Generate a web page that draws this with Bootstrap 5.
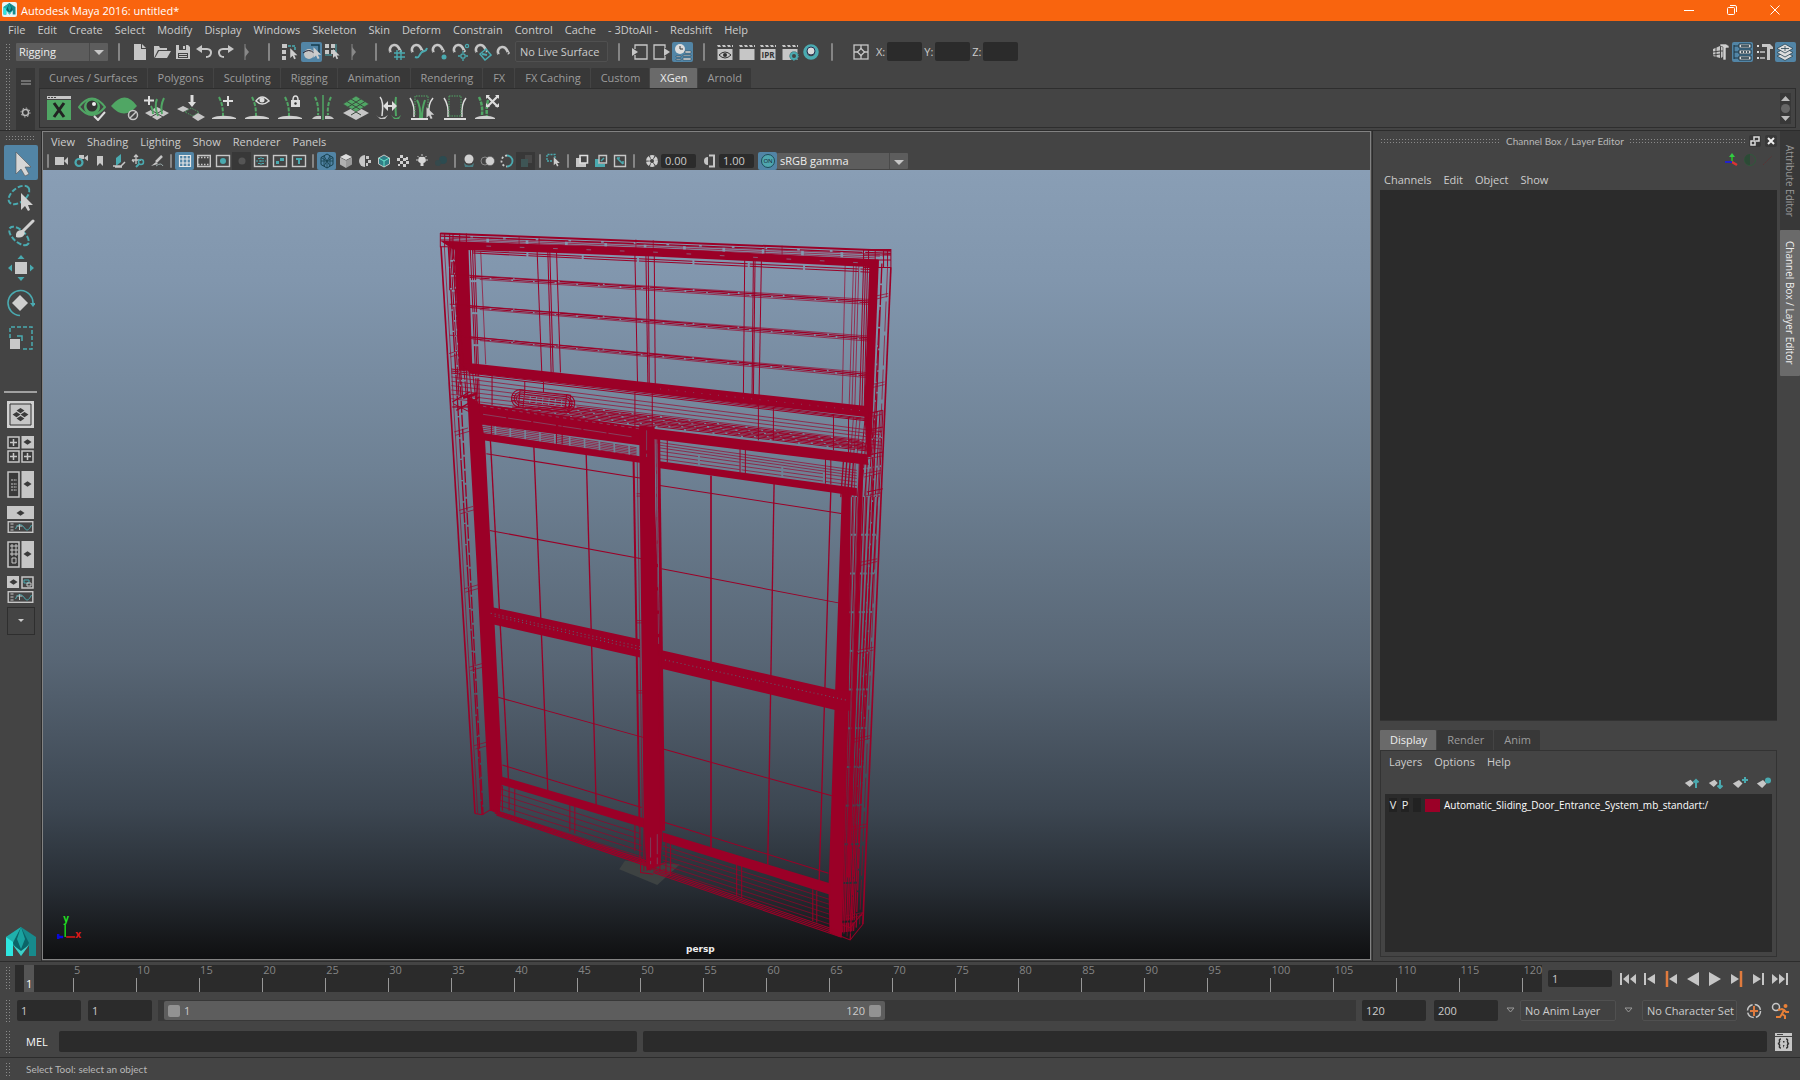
<!DOCTYPE html>
<html lang="en">
<head>
<meta charset="utf-8">
<meta name="viewport" content="width=device-width, initial-scale=1">
<title>Autodesk Maya 2016: untitled*</title>
<link rel="stylesheet" href="https://cdn.jsdelivr.net/npm/bootstrap@5.3.0/dist/css/bootstrap.min.css">
<style>
:root{--g:#c6c6c6;--t:#4aaab0;--gr:#50a664;--bg:#444;--dk:#2b2b2b;--on:#5285a6}
body{font:11px/16px "Open Sans","Noto Sans",sans-serif;background:var(--bg);color:#ccc;height:100vh;overflow:hidden}
button,input,select{font:inherit;color:inherit;border:0;background:none;padding:0;border-radius:0}
a{color:inherit;text-decoration:none}
svg{display:block;flex:none}
svg:not([fill]){fill:none}
.titlebar{height:21px;background:#f9640e;color:#fff;font-size:11px;padding-left:2px}
.wbtn{width:43px;height:19px}
.menurow{height:18px;gap:12px;padding-left:8px}
.statusrow{height:25px}
.grip{width:7px;flex:none;margin-left:5px;align-self:stretch;background:radial-gradient(circle,#8a8a8a 0 .7px,transparent .8px) 0 0/3px 3px}
.griph{height:6px;background:radial-gradient(circle,#8a8a8a 0 .7px,transparent .8px) 0 0/3px 3px}
.cell{flex:1 1 0;min-width:0;height:20px;display:flex;align-items:center;justify-content:center}
.cell.on,.vcell.on{background:var(--on);border-radius:2px}
.sepbar::before{content:"";width:2px;height:18px;background:#858585;border-radius:1px}
.picker{position:relative;background:#5d5d5d;border-radius:1px}
.picker select{appearance:none;width:100%;height:100%;padding-left:3px;color:#eee}
.picker::after{content:"";position:absolute;right:4px;top:7px;border:5px solid transparent;border-top-color:#c6c6c6;border-bottom:0;pointer-events:none}
.picker::before{content:"";position:absolute;right:18px;top:0;bottom:0;width:1px;background:#4a4a4a}
.field{background:var(--dk);border-radius:2px;color:#ccc}
.axis{margin:0 2px}
.boxed{border:1px solid #505050;border-radius:2px;height:21px;padding-left:4px;text-align:left;background:#414141}
.shelf{height:62px}
.shelfside{width:19px;background:#373737}
.tabbtn{height:20px;background:#383838;color:#9c9c9c;padding:0 9px 0 10px;margin-right:1px;border-radius:1px 1px 0 0}
.tabbtn.on{background:#6a6a6a;color:#eee}
.shelfbox{border:1px solid #2e2e2e;height:40px}
.seam{border-top:1px solid #2c2c2c}
.toolbox{width:42px;border-right:1px solid #2c2c2c}
.toolbtn{width:34px;height:35px;display:flex;align-items:center;justify-content:center}
.toolbtn.on{background:var(--on);border-radius:2px}
.toolrule{height:2px;background:#a0a0a0;margin:36px 0 8px}
.viewpanel{border:1px solid #828282;margin:0 1px 1px 0}
.vcell{width:19px;height:18px;display:flex;align-items:center;justify-content:center;flex:none}
.vsep{width:9px;height:18px;display:flex;justify-content:center;align-items:center;flex:none}
.vsep::before{content:"";width:2px;height:14px;background:#858585;border-radius:1px}
.off{opacity:.35}
.scene{flex:1 1 0;min-height:0;width:100%;background:linear-gradient(#899eb5,#8196ad 14%,#6e8194 38%,#586675 62%,#3c4651 81%,#272d34 91%,#17191c 97%,#0f1011)}
.sidepanel{width:408px;border-left:1px solid #2c2c2c;padding-left:7px;padding-right:3px}
.vtab{writing-mode:vertical-rl;width:20px;background:#383838;color:#999;text-align:center;font-size:10px}
.vtab.on{background:#6a6a6a;color:#eee;border-radius:1px}
.smallbtn{width:12px;height:12px;background:#383838;border-radius:2px}
.dark{background:var(--dk)}
.framebox{border:1px solid #333}
.split{height:1px;background:#333;margin-bottom:9px}
.timeline{height:27px;background:var(--dk);color:#848484}
.tick{position:relative;height:27px;padding-left:1px;line-height:10px;min-width:0;white-space:nowrap}
.tick::after{content:"";position:absolute;left:0;bottom:0;width:1px;height:14px;background:#989898}
.nowmark{position:absolute;left:9px;top:0;width:10px;height:27px;background:#555;color:#fff;padding:11px 0 0 2px;line-height:16px}
.w64{width:64px}
.h21{height:21px}
.pb{width:21px;height:20px;flex:1 1 0;display:flex;justify-content:center;align-items:center}
.rangebar{background:#5d5d5d;height:19px;border-radius:2px;padding:0 4px}
.knob{width:12px;height:12px;background:#929292;border-radius:2px}
.tight{font-family:Lato,"Open Sans",sans-serif;font-size:10px;color:#b8b8b8}
.hint{height:23px}
.layerbit{width:8px;height:14px;background:#222;color:#eee;text-align:center;line-height:14px}
.layername{font-size:10px;color:#fff}
</style>
<script src="https://cdn.jsdelivr.net/npm/bootstrap@5.3.0/dist/js/bootstrap.bundle.min.js"></script>
</head>
<body class="d-flex flex-column">
<svg width="0" height="0" class="position-absolute" aria-hidden="true">
<defs>
<symbol id="arrow" viewBox="0 0 20 20"><path d="M5 1v15l3.6-3.3L11 18l2.6-1.2-2.4-5H16z" fill="#cdcdcd"/></symbol>
<symbol id="mag" viewBox="0 0 18 18"><path d="M2.5 9.500C1 6 2.500 2.500 6 2c2-.2 3.500.8 4.500 2.500L13 9" stroke="#c6c6c6" stroke-width="2.600"/><path d="M1.500 9l3 2.500M12 7l-2 3.500" stroke="#444" stroke-width="1"/></symbol>
<symbol id="clap" viewBox="0 0 18 18"><path d="M1 2h3l1 2H2zM6 2h3l1 2H7zM11 2h3l1 2h-3zM16 2h1v2h-1z" fill="#c6c6c6"/><rect x="1.500" y="6" width="15" height="11" fill="#c6c6c6"/></symbol>
<symbol id="blade" viewBox="0 0 26 26"><path d="M8 2c3 6 4 11 4 19" stroke="#50a664" stroke-width="2" stroke-dasharray="4 1.500"/><path d="M1 24v-1c5-3 18-3 24 0v1z" fill="#d0d0d0"/></symbol>
<symbol id="frame" viewBox="0 0 16 16"><rect x="1.500" y="2.500" width="13" height="11" stroke="#c6c6c6" stroke-width="1.400"/></symbol>
<symbol id="dia" viewBox="0 0 10 8"><path d="M5 1l4.500 3L5 7 .5 4z" fill="#3a3a3a"/></symbol>
<symbol id="curve" viewBox="0 0 26 12"><rect x=".7" y=".7" width="24.600" height="10.600" stroke="#c6c6c6" stroke-width="1.400"/><path d="M3 3h3M3 6h3M3 9h3M9 5h6M12 3v6" stroke="#c6c6c6"/><path d="M8 8c3-7 7-4 9-1s4 3 7-3" stroke="#4aaab0"/></symbol>
<symbol id="logo" viewBox="0 0 30 30"><path d="M0 10L15 0l15 10v19h-7V18l-8 11-8-11v11H0z" fill="#178a8c"/><path d="M0 10l7 3v16H0z" fill="#2ee6e0"/><path d="M15 0l-8 16 8 13 8-13z" fill="#0b6468"/><path d="M15 0l-4 12 4 10 4-10z" fill="#1aa3a1"/><path d="M7 18l8 6 8-6-8 11z" fill="#3fd0c8"/><path d="M0 10L15 0 7 15z" fill="#20b0ac"/></symbol>
<symbol id="layer" viewBox="0 0 16 12"><path d="M1 6l7-4 4 4-5 5z" fill="#c6c6c6"/></symbol>
</defs></svg>

<header class="titlebar d-flex align-items-start">
<svg width="15" height="17"><rect y="2" width="15" height="15" rx="2" fill="#e8f4f4"/><use href="#logo" x="1" y="3" width="13" height="12"/></svg>
<span class="ms-1 me-auto mt-0 pt-0 align-self-center">Autodesk Maya 2016: untitled*</span>
<button class="wbtn" aria-label="Minimize"><svg class="mx-auto" width="12" height="12"><path d="M1 6.500h10" stroke="#fff"/></svg></button>
<button class="wbtn" aria-label="Restore"><svg class="mx-auto" width="12" height="12" stroke="#fff"><rect x="1.500" y="3.500" width="7" height="7" rx="1"/><path d="M4 1.500h5q1.500 0 1.500 1.500v5"/></svg></button>
<button class="wbtn me-1" aria-label="Close"><svg class="mx-auto" width="12" height="12" stroke="#fff"><path d="M1.500 1.500l9 9m0-9l-9 9"/></svg></button>
</header>

<nav class="menurow d-flex align-items-center">
<a href="#">File</a><a href="#">Edit</a><a href="#">Create</a><a href="#">Select</a><a href="#">Modify</a><a href="#">Display</a><a href="#">Windows</a><a href="#">Skeleton</a><a href="#">Skin</a><a href="#">Deform</a><a href="#">Constrain</a><a href="#">Control</a><a href="#">Cache</a><a href="#">- 3DtoAll -</a><a href="#">Redshift</a><a href="#">Help</a>
</nav>

<div class="statusrow d-flex align-items-center">
<div class="grip my-1"></div>
<div class="picker ms-1" style="width:92px;height:18px"><select aria-label="Menu set"><option>Rigging</option></select></div>
<div class="d-flex align-items-center" style="width:407px" role="toolbar">
<span class="cell sepbar"></span>
<button class="cell" aria-label="New"><svg width="16" height="18"><path d="M2 1h7v5h5v11H2zM10 1l4 4h-4z" fill="#c6c6c6"/></svg></button>
<button class="cell" aria-label="Open"><svg width="18" height="16"><path d="M1 14V2h5l1 2h7v2H5zM6 7h12l-4 7H2z" fill="#c6c6c6"/></svg></button>
<button class="cell" aria-label="Save"><svg width="16" height="16"><path d="M1 1h12l2 2v12H1z" fill="#c6c6c6"/><path d="M4 1h7v5H4zM3 9h10v5H3z" fill="#444"/><path d="M8 2h2v3H8zM4 10h8v1H4zm0 2h8v1H4z" fill="#c6c6c6"/></svg></button>
<button class="cell" aria-label="Undo"><svg width="17" height="16"><path d="M5 5h6c6 0 5 8-1 8" stroke="#c6c6c6" stroke-width="2"/><path d="M0 5l6-4v8z" fill="#c6c6c6"/></svg></button>
<button class="cell" aria-label="Redo"><svg width="17" height="16"><path d="M12 5H6c-6 0-5 8 1 8" stroke="#c6c6c6" stroke-width="2"/><path d="M17 5l-6-4v8z" fill="#c6c6c6"/></svg></button>
<span class="cell"><svg width="6" height="18"><path d="M1 1v16" stroke="#888"/><path d="M1 4l4 5-4 5z" fill="#888"/></svg></span>
<span class="cell sepbar"></span>
<button class="cell" aria-label="Select by hierarchy"><svg width="18" height="18"><path d="M1 1h5v4H1zM1 7h4v4H1zM1 13h4v4H1z" fill="#c6c6c6"/><path d="M7 3h7v4" stroke="#4aaab0" stroke-width="1.500" stroke-dasharray="3 1"/><use href="#arrow" x="6" y="4" width="13" height="14"/></svg></button>
<button class="cell on" aria-label="Select by object"><svg width="20" height="18"><path d="M9 2h8v8" stroke="#163c4e" stroke-width="1.500"/><circle cx="7" cy="11" r="5" fill="#c6c6c6"/><path d="M1 10q6-5 11 0" stroke="#223" /><use href="#arrow" x="8" y="3" width="14" height="15"/></svg></button>
<button class="cell" aria-label="Select by component"><svg width="18" height="18"><path d="M1 1h4v4H1zM7 1h4v4H7zM1 7h4v4H1zM7 7h4v4H7z" fill="#c6c6c6"/><path d="M12 1v9M1 12h7" stroke="#4aaab0"/><use href="#arrow" x="6" y="5" width="12" height="13"/></svg></button>
<span class="cell"><svg width="6" height="18"><path d="M1 1v16" stroke="#888"/><path d="M1 4l4 5-4 5z" fill="#888"/></svg></span>
<span class="cell sepbar"></span>
<button class="cell" aria-label="Snap to grid"><svg width="18" height="18"><use href="#mag" width="18" height="18"/><path d="M6 10h11M6 14h11M9 7v10M13 7v10" stroke="#4aaab0" stroke-width="1.400"/></svg></button>
<button class="cell" aria-label="Snap to curve"><svg width="18" height="18"><use href="#mag" width="18" height="18"/><path d="M5 14c5 2 4-3 7-5s4 0 5-4" stroke="#4aaab0" stroke-width="2"/></svg></button>
<button class="cell" aria-label="Snap to point"><svg width="18" height="18"><use href="#mag" width="18" height="18"/><circle cx="13" cy="14" r="2.500" fill="#4aaab0"/></svg></button>
<button class="cell" aria-label="Snap to projected center"><svg width="18" height="18"><use href="#mag" width="18" height="18"/><g stroke="#4aaab0" stroke-width="1.300"><circle cx="11" cy="13" r="2.200"/><circle cx="15" cy="3" r="1.600"/><path d="M11 8v2m0 6v2m-5-5h2m6 0h2"/></g></svg></button>
<button class="cell" aria-label="Snap to view plane"><svg width="18" height="18"><use href="#mag" width="18" height="18"/><path d="M6 11l6-5 5 6-6 5z" stroke="#4aaab0" stroke-width="1.500"/><path d="M8 11l5 1" stroke="#4aaab0" stroke-width="2"/></svg></button>
<button class="cell" aria-label="Make live"><svg width="18" height="18"><use href="#mag" x="1" y="2" width="18" height="18"/></svg></button>
</div>
<button class="boxed" style="width:93px">No Live Surface</button>
<div class="d-flex align-items-center" style="width:235px" role="toolbar">
<span class="cell sepbar"></span>
<button class="cell" aria-label="Input connections"><svg width="18" height="18"><path d="M4 6V2h12v14H4v-4" stroke="#c6c6c6" stroke-width="1.300"/><path d="M1 5l6 4-6 4z" fill="#c6c6c6"/></svg></button>
<button class="cell" aria-label="Output connections"><svg width="18" height="18"><path d="M13 5V2H2v14h11v-3" stroke="#c6c6c6" stroke-width="1.300"/><path d="M12 5l6 4-6 4z" fill="#c6c6c6"/></svg></button>
<button class="cell on" aria-label="Construction history"><svg width="18" height="18"><circle cx="6" cy="6" r="5" fill="#ddd"/><path d="M6 3v3h3" stroke="#333"/><path d="M11 8h6v2h-6zM9 12h8v1H9zM9 15h8v2H9zM2 13h5v1H2zM2 16h5v1H2z" fill="#e0e0e0" stroke="#203948" stroke-width=".5"/></svg></button>
<span class="cell sepbar"></span>
<button class="cell" aria-label="Render view"><svg width="18" height="18"><use href="#clap" width="18" height="18"/><path d="M3 12q6-6 12 0q-6 6-12 0z" stroke="#333"/><circle cx="9" cy="12" r="2" fill="#333"/></svg></button>
<button class="cell" aria-label="Render frame"><svg width="18" height="18"><use href="#clap" width="18" height="18"/></svg></button>
<button class="cell" aria-label="IPR render"><svg width="18" height="18"><use href="#clap" width="18" height="18"/><text x="9" y="15" font-size="8" font-weight="700" fill="#333" text-anchor="middle">IPR</text></svg></button>
<button class="cell" aria-label="Render settings"><svg width="18" height="18"><use href="#clap" width="18" height="18"/><circle cx="13" cy="13" r="4.500" fill="#444"/><circle cx="13" cy="13" r="3" stroke="#4aaab0" stroke-width="2"/><circle cx="13" cy="13" r="4.300" stroke="#4aaab0" stroke-dasharray="1.500 1.500"/></svg></button>
<button class="cell" aria-label="Hypershade"><svg width="18" height="18"><circle cx="9" cy="9" r="6" stroke="#4aaab0" stroke-width="3.500"/><circle cx="9" cy="8" r="4" fill="#d8d8d8" stroke="#235" /></svg></button>
<span class="cell sepbar"></span>
</div>
<button class="vcell ms-2" aria-label="Input operations"><svg width="16" height="16" stroke="#c6c6c6" stroke-width="1.300"><rect x="1" y="1" width="14" height="14"/><path d="M8 1v4m0 6v4M1 8h4m6 0h4"/><rect x="5.500" y="5.500" width="5" height="5" transform="rotate(45 8 8)"/></svg></button>
<label class="axis ps-1" for="cx">X:</label><input id="cx" class="field" style="width:35px;height:19px">
<label class="axis" for="cy">Y:</label><input id="cy" class="field" style="width:35px;height:19px">
<label class="axis" for="cz">Z:</label><input id="cz" class="field" style="width:35px;height:19px">
<div class="d-flex ms-auto me-1" style="width:86px">
<button class="cell" aria-label="Modeling toolkit"><svg width="18" height="18"><path d="M1 6l7-3v12l-7-2zM9 3l3 1v9l-3 2z" fill="#c6c6c6"/><path d="M1 9l7-1m-7 4l7-1M4 4v10m5-6h3" stroke="#444"/><path d="M8 1h6l3 2v2h-3v12h-3V4L8 3z" fill="#d0d0d0" stroke="#444" stroke-width=".6"/></svg></button>
<button class="cell on" aria-label="Channel box"><svg width="20" height="18"><path d="M2 2v14M2 3h5M2 9h5M2 15h5" stroke="#1c3442"/><path d="M7 1h12v4H7zM7 7h12v4H7zM7 13h12v4H7z" fill="#ddd" stroke="#1c3442"/><path d="M9 3h8M9 15h8M9 9h2m1 0h2m1 0h2" stroke="#1c3442" stroke-width="1.500"/></svg></button>
<button class="cell" aria-label="Tool settings"><svg width="18" height="18"><path d="M2 2h2v2H2zM2 8h2v2H2zM2 14h2v2H2z" fill="#ddd"/><path d="M5 9h5M5 15h5" stroke="#c6c6c6" stroke-width="1.500"/><path d="M7 1h8l3 3v2h-3v11h-3V4H7z" fill="#c6c6c6"/></svg></button>
<button class="cell on" aria-label="Layers"><svg width="18" height="18" fill="#ddd" stroke="#2b4452" stroke-width=".8"><path d="M9 9l8 4-8 4.500L1 13z"/><path d="M9 5l8 4.500L9 14 1 9.500z"/><path d="M9 1l8 4.500L9 10 1 5.500z"/><path d="M5 5.500h8M9 3v5"/></svg></button>
</div>
</div>

<section class="shelf d-flex mt-1">
<div class="grip"></div>
<div class="shelfside ms-1 d-flex flex-column align-items-center justify-content-between">
<button aria-label="Shelf menu" class="mt-2 pt-1"><svg width="10" height="5"><path d="M0 1h10M0 4h10" stroke="#aaa"/></svg></button>
<button aria-label="Shelf options" class="mb-2 pb-1"><svg width="11" height="11"><circle cx="5.500" cy="5.500" r="3" stroke="#bbb" stroke-width="1.500"/><circle cx="5.500" cy="5.500" r="4.500" stroke="#bbb" stroke-dasharray="1.500 2"/></svg></button>
</div>
<div class="flex-fill d-flex flex-column ms-1 me-1">
<div class="d-flex"><button class="tabbtn">Curves / Surfaces</button><button class="tabbtn">Polygons</button><button class="tabbtn">Sculpting</button><button class="tabbtn">Rigging</button><button class="tabbtn">Animation</button><button class="tabbtn">Rendering</button><button class="tabbtn">FX</button><button class="tabbtn">FX Caching</button><button class="tabbtn">Custom</button><button class="tabbtn on">XGen</button><button class="tabbtn">Arnold</button></div>
<div class="shelfbox d-flex align-items-center">
<div class="d-flex align-items-center" style="width:461px;margin-left:3px" role="toolbar">
<button class="cell" aria-label="XGen window"><svg width="26" height="26"><path d="M1 1h24v3H1z" fill="#c6c6c6"/><path d="M2 2.500h9" stroke="#444" stroke-dasharray="2 1"/><path d="M1 5h24v20H1z" fill="#50a664"/><path d="M8 8l10 14M18 8L8 22" stroke="#222" stroke-width="3"/></svg></button>
<button class="cell" aria-label="Preview"><svg width="28" height="26"><path d="M1 12Q14-5 27 12Q14 28 1 12z" stroke="#50a664" stroke-width="2"/><circle cx="14" cy="12" r="8" fill="#50a664"/><circle cx="14" cy="11" r="5.500" fill="#333"/><circle cx="16" cy="9" r="2" fill="#eee"/><path d="M16 21l4 4 7-8" stroke="#ddd" stroke-width="2"/></svg></button>
<button class="cell" aria-label="Clear preview"><svg width="28" height="26"><path d="M0 11Q14-6 26 11Q13 26 0 11z" fill="#50a664"/><circle cx="22" cy="20" r="4.500" fill="#444" stroke="#c6c6c6" stroke-width="1.500"/><path d="M19 23l6-6" stroke="#c6c6c6" stroke-width="1.500"/></svg></button>
<button class="cell" aria-label="Add guides"><svg width="28" height="26"><path d="M13 12l12 6-12 7-12-7z" fill="#c6c6c6"/><path d="M7 15l12 7M19 15L7 22" stroke="#444"/><path d="M5 1v9M0 5.500h10" stroke="#ddd" stroke-width="2"/><path d="M13 4q-3 7 1 17M20 3q-4 8-2 16M7 11q2 3 2 8" stroke="#50a664" stroke-width="2"/></svg></button>
<button class="cell" aria-label="Place guides"><svg width="28" height="26"><path d="M0 14l6-3 6 3-6 3zM15 22l6-4 7 4-7 4z" fill="#c6c6c6"/><path d="M8 17l6-4 8 4-6 4z" stroke="#50a664" stroke-dasharray="1 1"/><path d="M15 0v8" stroke="#ddd" stroke-width="3"/><path d="M11 7h8l-4 5z" fill="#ddd"/></svg></button>
<button class="cell" aria-label="Add guide"><svg width="26" height="26"><use href="#blade" width="26" height="26"/><path d="M17 1v10M12 6h10" stroke="#ddd" stroke-width="2"/></svg></button>
<button class="cell" aria-label="Show guide"><svg width="26" height="26"><use href="#blade" width="26" height="26"/><path d="M12 6Q18-2 25 6Q18 12 12 6z" stroke="#ddd" stroke-width="1.500"/><circle cx="18" cy="5" r="2.500" fill="#ddd"/></svg></button>
<button class="cell" aria-label="Lock guide"><svg width="26" height="26"><use href="#blade" width="26" height="26"/><path d="M14 5h9v7h-9z" fill="#ddd"/><path d="M16 5q0-4 2.500-4T21 5" stroke="#ddd" stroke-width="1.500"/><circle cx="18.500" cy="8.500" r="1.200" fill="#333"/></svg></button>
<button class="cell" aria-label="Mirror guides"><svg width="26" height="26"><path d="M5 2q4 8 3 18M21 2q-4 8-3 18" stroke="#50a664" stroke-width="2" stroke-dasharray="4 1.500"/><path d="M13 0v25" stroke="#50a664" stroke-width="1.500"/><path d="M2 24q3-4 9-3v3zM24 24q-3-4-9-3v3z" fill="#c6c6c6"/></svg></button>
<button class="cell" aria-label="Bake"><svg width="28" height="26"><path d="M14 11l13 7-13 7-13-7z" fill="#c6c6c6"/><path d="M14 1l13 8-13 8L1 9z" fill="#50a664" stroke="#444" stroke-width=".6"/><path d="M9 4l13 8M5 6.500l13 8M19 4L6 12M23 6.500l-13 8M9 20l5-3 5 3" stroke="#3b4a3e"/></svg></button>
<button class="cell" aria-label="Transfer"><svg width="26" height="26"><path d="M4 2q4 4 2 19" stroke="#ddd" stroke-width="1.500"/><path d="M20 2q-1 6 0 19" stroke="#50a664" stroke-width="2"/><path d="M9 11h9" stroke="#ddd" stroke-width="2"/><path d="M12 6v10l-5-5zM16 6v10l5-5z" fill="#ddd"/><path d="M0 20q5 6 12 0l-3 4H4z" fill="#c6c6c6"/><path d="M15 20q5 6 10 0l-2 4h-5z" fill="#50a664"/></svg></button>
<button class="cell" aria-label="Select guides"><svg width="26" height="26"><path d="M1 3q5 7 4 19M24 3q-5 6-4 15" stroke="#ddd" stroke-width="1.500"/><path d="M6 20V1h13v13" stroke="#50a664" stroke-dasharray="1.500 1"/><path d="M8 5q4 7 3 18M16 5q-3 8-3 18" stroke="#50a664" stroke-width="2"/><path d="M2 24h17" stroke="#ddd" stroke-width="2"/><use href="#arrow" x="14" y="11" width="14" height="15"/></svg></button>
<button class="cell" aria-label="Isolate guides"><svg width="26" height="26"><path d="M2 3q5 7 4 19M24 3q-5 6-4 19" stroke="#ddd" stroke-width="1.500"/><path d="M7 1h12v20H7z" stroke="#50a664" stroke-dasharray="1.500 1"/><path d="M2 24h22" stroke="#ddd" stroke-width="2"/></svg></button>
<button class="cell" aria-label="Delete guides"><svg width="26" height="26"><path d="M5 2q4 8 3 18M14 5q-2 8-1 16" stroke="#50a664" stroke-width="2.500" stroke-dasharray="4 1"/><path d="M1 24v-1c5-3 15-3 20 0v1z" fill="#d0d0d0"/><path d="M13 1l11 11M24 1L13 12" stroke="#ddd" stroke-width="2.200"/><path d="M12 0h4l-4 4zM25 0h-4l4 4zM12 12h4l-4-4zM25 12h-4l4-4z" fill="#ddd"/></svg></button>
</div>
<div class="ms-auto me-1" style="background:#383838"><svg width="11" height="31"><path d="M1 8l4.500-5L10 8zM1 23l4.500 5 4.500-5z" fill="#bbb"/><circle cx="5.500" cy="15.500" r="4.500" fill="#666"/></svg></div>
</div>
</div>
</section>

<main class="seam d-flex flex-fill" style="min-height:0">
<aside class="toolbox d-flex flex-column align-items-center">
<div class="griph w-75 mt-1 mb-1"></div>
<button class="toolbtn on" aria-label="Select"><svg width="26" height="28"><path d="M8 3v22l5-5 4 7 4-2-4-7h6z" fill="#d6d6d6" stroke="#555" stroke-width=".6"/></svg></button>
<button class="toolbtn" aria-label="Lasso"><svg width="28" height="28"><ellipse cx="12" cy="11" rx="12" ry="7" transform="rotate(-38 12 11)" stroke="#4aaab0" stroke-width="2" stroke-dasharray="5 2"/><path d="M14 9v17l4-4 3 5 2-1-2-5h5z" fill="#d0d0d0"/></svg></button>
<button class="toolbtn" aria-label="Paint select"><svg width="28" height="28"><ellipse cx="12" cy="17" rx="12" ry="6" transform="rotate(42 12 17)" stroke="#4aaab0" stroke-width="2" stroke-dasharray="5 2"/><path d="M26 2L16 12" stroke="#d0d0d0" stroke-width="3" stroke-linecap="round"/><path d="M9 18q-1-7 6-7l3 3q-2 6-9 4z" fill="#d0d0d0"/></svg></button>
<button class="toolbtn" aria-label="Move"><svg width="28" height="28"><path d="M8 8h12v12H8z" fill="#c9c9c9"/><path d="M10.500 5l3.500-4 3.500 4zM10.500 23l3.500 4 3.500-4zM5 10.500L1 14l4 3.500zM23 10.500l4 3.500-4 3.500z" fill="#4aaab0"/></svg></button>
<button class="toolbtn" aria-label="Rotate"><svg width="28" height="28"><path d="M13 26.500a12.500 12.500 0 1 1 13-12" stroke="#4aaab0" stroke-width="1.600"/><path d="M23 14h6l-3 4z" fill="#4aaab0"/><path d="M13 6l8 8-8 8-8-8z" fill="#cfcfcf"/></svg></button>
<button class="toolbtn" aria-label="Scale"><svg width="28" height="28"><path d="M3 14V3h22v22H14" stroke="#4aaab0" stroke-width="1.500" stroke-dasharray="4 2"/><path d="M10 12h5v5" stroke="#4aaab0" stroke-width="1.500"/><path d="M3 15h10v10H3z" fill="#c9c9c9"/></svg></button>
<div class="w-100 px-1"><div class="toolrule"></div></div>
<div class="d-flex flex-column align-items-center gap-2">
<button aria-label="Single view"><svg width="27" height="27"><path d="M0 0h27v27H0z" fill="#d0d0d0"/><path d="M3 3h21v21H3z" fill="#c6c6c6" stroke="#333"/><use href="#dia" x="9" y="6" width="9" height="7"/><use href="#dia" x="9" y="14" width="9" height="7"/><use href="#dia" x="5" y="10" width="9" height="7"/><use href="#dia" x="13" y="10" width="9" height="7"/></svg></button>
<button aria-label="Four view"><svg width="27" height="27"><path d="M1 1h11v11H1zM1 15h11v11H1zM15 15h11v11H15z" fill="#3a3a3a" stroke="#c6c6c6" stroke-width="1.500"/><path d="M14.500 0H27v12.500H14.500z" fill="#c6c6c6"/><use href="#dia" x="16" y="2" width="9" height="8"/><path d="M6.500 3v7M3 6.500h7M6.500 17v7M3 20.500h7M20.500 17v7M17 20.500h7" stroke="#c6c6c6" stroke-width="1.500"/></svg></button>
<button aria-label="Outliner view"><svg width="27" height="27"><path d="M1 1h11v25H1z" fill="#3a3a3a" stroke="#c6c6c6" stroke-width="1.500"/><path d="M14.500 0H27v27H14.500z" fill="#c6c6c6"/><use href="#dia" x="16" y="9" width="9" height="8"/><path d="M4 9h6M4 13h6M4 16h6M4 19h6" stroke="#c6c6c6" stroke-dasharray="2 .7"/></svg></button>
<button aria-label="Graph view"><svg width="27" height="27"><path d="M0 0h27v13H0z" fill="#c6c6c6"/><use href="#dia" x="9" y="3" width="9" height="8"/><use href="#curve" y="15" width="27" height="12"/></svg></button>
<button aria-label="Hypershade view"><svg width="27" height="27"><path d="M1 1h11v25H1z" fill="#3a3a3a" stroke="#c6c6c6" stroke-width="1.500"/><path d="M14.500 0H27v27H14.500z" fill="#c6c6c6"/><use href="#dia" x="16" y="9" width="9" height="8"/><path d="M4 4h2v2H4zM8 4h2v2H8zM4 8h2v2H4zM8 8h2v2H8zM4 12h2v2H4zM8 12h2v2H8zM5 17h4v5H5z" stroke="#c6c6c6"/></svg></button>
<button aria-label="Persp graph view"><svg width="27" height="27"><path d="M0 0h12v12H0z" fill="#c6c6c6"/><use href="#dia" x="2" y="2" width="9" height="8"/><path d="M15 1h11v11H15z" stroke="#c6c6c6" stroke-width="1.500"/><path d="M17 4h5v3h-5z" stroke="#4aaab0"/><path d="M20 7h4v3h-4z" stroke="#c6c6c6"/><use href="#curve" y="15" width="27" height="12"/></svg></button>
</div>
<button aria-label="More layouts" style="width:28px;height:28px;border:1px solid #2e2e2e;margin-top:4px"><svg class="mx-auto" width="6" height="4"><path d="M0 0h6L3 3z" fill="#ccc"/></svg></button>
<svg class="mt-auto mb-1" width="30" height="30"><use href="#logo" width="30" height="30"/></svg>
</aside>

<section class="viewpanel flex-fill d-flex flex-column" style="min-width:0">
<nav class="d-flex align-items-center ps-2" style="height:19px;gap:12px"><a href="#">View</a><a href="#">Shading</a><a href="#">Lighting</a><a href="#">Show</a><a href="#">Renderer</a><a href="#">Panels</a></nav>
<div class="d-flex align-items-center" style="height:19px" role="toolbar">
<span class="vsep"></span>
<button class="vcell" aria-label="Camera"><svg width="14" height="12"><path d="M0 2h9v8H0zM9 6l4-4v8z" fill="#c6c6c6"/></svg></button>
<button class="vcell" aria-label="Camera settings"><svg width="14" height="14"><path d="M5 1h5v4H5zM10 4l4-3v6z" fill="#c6c6c6"/><circle cx="5" cy="8.500" r="3.500" stroke="#4aaab0" stroke-width="2.200"/></svg></button>
<button class="vcell" aria-label="Bookmark"><svg width="12" height="14"><path d="M3 2h6v10L6 9l-3 3z" fill="#c6c6c6"/></svg></button>
<button class="vcell" aria-label="Image plane"><svg width="14" height="14"><path d="M4 4l5-4v8l-5 4z" fill="#4aaab0"/><path d="M1 12h8l4-4M3 13h7" stroke="#c6c6c6" stroke-width="1.500"/></svg></button>
<button class="vcell" aria-label="Pan zoom"><svg width="14" height="14"><path d="M5 1v9M1 6h9M3 3l2-2 2 2M3 8L1 6" stroke="#c6c6c6" stroke-width="1.300"/><circle cx="10" cy="8" r="2.500" stroke="#4aaab0" stroke-width="1.500"/><path d="M8 10l-3 3" stroke="#4aaab0" stroke-width="2"/></svg></button>
<button class="vcell" aria-label="Grease pencil"><svg width="14" height="14"><path d="M12 2L6 8" stroke="#c6c6c6" stroke-width="2.500"/><path d="M1 12l5-4 2 2z" fill="#c6c6c6"/><path d="M6 12q5-4 7 0" stroke="#9aa"/></svg></button>
<span class="vsep"></span>
<button class="vcell on" aria-label="Grid"><svg width="14" height="14"><path d="M1.500 1.500h11v11h-11zM1.500 5h11M1.500 9h11M5 1.500v11M9 1.500v11" stroke="#e8e8e8" stroke-width="1.200"/></svg></button>
<button class="vcell" aria-label="Film gate"><svg width="14" height="14"><path d="M.7 1.500h12.600v11H.7z" stroke="#c6c6c6" stroke-width="1.400"/><path d="M1 3.500h12M1 10.500h12" stroke="#c6c6c6" stroke-width="1.500" stroke-dasharray="1.500 1.500"/></svg></button>
<button class="vcell" aria-label="Resolution gate"><svg width="16" height="16"><use href="#frame" width="16" height="16"/><circle cx="8" cy="8" r="3" fill="#4aaab0"/></svg></button>
<button class="vcell off" aria-label="Gate mask" style="background:#222"><svg width="16" height="16"><circle cx="8" cy="8" r="3.500" fill="#777"/></svg></button>
<button class="vcell" aria-label="Field chart"><svg width="16" height="16"><use href="#frame" width="16" height="16"/><path d="M8 4v8M3 8h10M5 5.500h2m2 0h2M5 10.500h2m2 0h2" stroke="#4aaab0" stroke-dasharray="2 1"/></svg></button>
<button class="vcell" aria-label="Safe action"><svg width="16" height="16"><use href="#frame" width="16" height="16"/><path d="M4 8h3v3H4zM8 5h4v3H8z" fill="#4aaab0"/></svg></button>
<button class="vcell" aria-label="Safe title"><svg width="16" height="16"><use href="#frame" width="16" height="16"/><path d="M5 6h6M8 6v5" stroke="#4aaab0" stroke-width="2"/></svg></button>
<span class="vsep"></span>
<button class="vcell on" aria-label="Wireframe"><svg width="16" height="16" stroke="#17414f"><path d="M8 1l6 3.500v7L8 15l-6-3.500v-7z"/><path d="M2 4.500L8 8l6-3.500M8 8v7M5 3v10l6-10v10zM2 8l12 0" stroke-width=".8"/></svg></button>
<button class="vcell" aria-label="Shaded"><svg width="14" height="14"><path d="M7 0l6 3-6 3-6-3z" fill="#ddd"/><path d="M1 3.500l6 3V14l-6-3.500z" fill="#b0b0b0"/><path d="M13 3.500l-6 3V14l6-3.500z" fill="#999"/></svg></button>
<button class="vcell" aria-label="Shadow split"><svg width="14" height="14"><path d="M7 1a6 6 0 0 0 0 12z" fill="#c6c6c6"/><path d="M8 2h3v3H8zM10 6h3v3h-3zM8 9h2v3H8z" fill="#c6c6c6"/></svg></button>
<button class="vcell" aria-label="Wire on shaded"><svg width="14" height="14"><path d="M7 1l5.500 3v6L7 13l-5.500-3V4z" fill="#2f7f86" stroke="#c6c6c6"/><path d="M1.500 4L7 7l5.500-3M7 7v6" stroke="#7fd" stroke-width=".8"/></svg></button>
<button class="vcell" aria-label="Textured"><svg width="14" height="14"><path d="M4 1h3v3H4zM10 3h2v3h-2zM1 4h3v3H1zM7 4h3v3H7zM4 7h3v3H4zM10 7h3v3h-3zM2 10h2v2H2zM7 10h3v3H7z" fill="#d0d0d0"/></svg></button>
<button class="vcell" aria-label="Lights"><svg width="14" height="14"><path d="M7 3a3 3 0 0 0-1.500 6v3h3V9A3 3 0 0 0 7 3z" fill="#d8d8d8"/><path d="M7 0v2M1 6h2m8 0h2M2.500 2L4 3.500M11.500 2L10 3.500" stroke="#c6c6c6"/></svg></button>
<button class="vcell" aria-label="Shadows"><svg width="14" height="14"><circle cx="9" cy="6" r="4" fill="#2c4b50"/><circle cx="4" cy="9" r="3" fill="#35494c"/></svg></button>
<span class="vsep"></span>
<button class="vcell" aria-label="Occlusion"><svg width="14" height="14"><circle cx="7" cy="5" r="4.500" fill="#d0d0d0"/><path d="M2 9q5 5 10 0l-1 4H3z" fill="#4a7f85"/></svg></button>
<button class="vcell" aria-label="Motion blur"><svg width="16" height="14"><circle cx="5" cy="7" r="4" stroke="#888"/><circle cx="10" cy="7" r="4.500" fill="#d0d0d0" stroke="#555" stroke-width=".5"/></svg></button>
<button class="vcell" aria-label="Antialias"><svg width="14" height="14"><path d="M7 1.500a5.500 5.500 0 0 1 0 11" stroke="#4aaab0" stroke-width="1.800"/><path d="M7 1.500a5.500 5.500 0 0 0 0 11" stroke="#ccc" stroke-width="1.800" stroke-dasharray="2 2"/></svg></button>
<button class="vcell off" aria-label="Depth of field" style="background:#222"><svg width="14" height="14"><path d="M2 5h7v8H2z" fill="#377"/><path d="M6 1h7v8H9V5H6z" fill="#555"/></svg></button>
<span class="vsep"></span>
<button class="vcell" aria-label="Isolate select"><svg width="15" height="15"><path d="M9 8V1.500H1V8h5" stroke="#4aaab0" stroke-width="1.300" stroke-dasharray="2 1"/><use href="#arrow" x="5" y="3" width="11" height="12"/></svg></button>
<span class="vsep"></span>
<button class="vcell" aria-label="X-ray"><svg width="14" height="14"><path d="M1 4h5v5h5v4H1z" fill="#c6c6c6"/><path d="M5 1.500h7.500V9H5z" stroke="#ddd" stroke-width="1.600"/></svg></button>
<button class="vcell" aria-label="X-ray joints"><svg width="14" height="14"><path d="M1 5h4v5h6v3H1z" fill="#4aaab0"/><path d="M5 1.500h7.500V9H5z" stroke="#c6c6c6" stroke-width="1.400"/><path d="M7 7l3-3" stroke="#4aaab0" stroke-width="1.500"/></svg></button>
<button class="vcell" aria-label="X-ray active"><svg width="14" height="14"><path d="M1.500 1.500h11v11h-11z" stroke="#c6c6c6" stroke-width="1.400"/><path d="M4 4l6 6M4 4h3M10 7v3" stroke="#4aaab0" stroke-width="1.500"/></svg></button>
<span class="vsep"></span>
<button class="vcell ms-1" aria-label="Exposure"><svg width="14" height="14"><circle cx="7" cy="7" r="4" stroke="#d0d0d0" stroke-width="4" stroke-dasharray="3.400 .8"/></svg></button>
<input class="field ps-1" aria-label="Exposure value" value="0.00" style="width:35px;height:14px">
<button class="vcell ms-1" aria-label="Gamma"><svg width="12" height="14"><path d="M4 3a4 4 0 0 0 0 8z" fill="#c6c6c6"/><path d="M5 1.500h5v11H5" stroke="#c6c6c6" stroke-width="2"/></svg></button>
<input class="field ps-1" aria-label="Gamma value" value="1.00" style="width:35px;height:14px">
<button class="vcell on ms-1" aria-label="View transform"><svg width="16" height="16"><circle cx="8" cy="8" r="6.500" fill="#4fa6ae" stroke="#1d4c58"/><text x="8" y="10" font-size="6" fill="#123" text-anchor="middle">ON</text></svg></button>
<div class="picker" style="width:131px;height:16px"><select aria-label="Color space"><option>sRGB gamma</option></select></div>
</div>
<svg class="scene" viewBox="43 170 1327 788" preserveAspectRatio="xMidYMid slice">
<g transform="translate(420 210) scale(.33333)" stroke="#9b0027" stroke-width="3" id="wire"></g>
<g stroke-width="1.500"><path d="M66 936V924" stroke="#19d419"/><path d="M67 936h9" stroke="#e01818"/><path d="M58 936h6M59 933v5" stroke="#0a0ad8" stroke-width="2.500"/></g>
<g font-weight="700" font-size="10"><text x="64" y="921" fill="#22dd22">y</text><text x="76" y="937" fill="#e01818">x</text></g>
<text x="686" y="951" fill="#eee" font-size="9" font-weight="700" font-family="DejaVu Sans">persp</text>
</svg>
</section>

<aside class="sidepanel d-flex flex-column">
<div class="d-flex align-items-center justify-content-between" style="height:19px">
<div class="griph" style="width:121px"></div><span class="tight">Channel Box / Layer Editor</span>
<div class="d-flex gap-1 align-items-center"><div class="griph" style="width:116px"></div>
<button class="smallbtn" aria-label="Float"><svg width="12" height="12" stroke="#ddd" stroke-width="1.500"><path d="M2 6h4v4H2zM5 5V2h5v4H7"/></svg></button>
<button class="smallbtn" aria-label="Close panel"><svg width="12" height="12" stroke="#eee" stroke-width="2"><path d="M3 3l6 6m0-6L3 9"/></svg></button></div>
</div>
<div class="d-flex justify-content-end gap-1 align-items-center" style="height:20px">
<svg width="16" height="16"><path d="M9 10V3" stroke="#2c2" stroke-width="1.500"/><path d="M6 5l3-4 3 4z" fill="#3c4"/><path d="M9 10l5 3" stroke="#d33" stroke-width="2.500"/><path d="M9 10H2" stroke="#22c" stroke-width="2"/></svg>
<svg width="14" height="14"><circle cx="7" cy="7" r="5.500" stroke="#2e5a3a"/><path d="M7 1a5.500 5.500 0 0 0 0 11z" fill="#2c4a36"/></svg>
<svg width="16" height="14"><path d="M2 12l9-9" stroke="#5a3434" stroke-dasharray="2 1"/></svg>
</div>
<nav class="d-flex align-items-center ps-1" style="height:20px;gap:12px"><a href="#">Channels</a><a href="#">Edit</a><a href="#">Object</a><a href="#">Show</a></nav>
<div class="dark flex-fill"></div>
<div class="split"></div>
<div class="d-flex"><button class="tabbtn on">Display</button><button class="tabbtn">Render</button><button class="tabbtn">Anim</button></div>
<div class="framebox d-flex flex-column px-1 pb-1 mb-1" style="height:207px">
<nav class="d-flex align-items-center ps-1" style="height:21px;gap:12px"><a href="#">Layers</a><a href="#">Options</a><a href="#">Help</a></nav>
<div class="d-flex justify-content-end gap-2 align-items-center" style="height:22px">
<button aria-label="Move layer up"><svg width="16" height="12"><use href="#layer" width="13" height="12"/><path d="M12 11V4M9.500 5.500L12 3l2.500 2.500" stroke="#4aaab0" stroke-width="2"/></svg></button>
<button aria-label="Move layer down"><svg width="16" height="12"><use href="#layer" width="13" height="12"/><path d="M12 3v7M9.500 8.500L12 11l2.500-2.500" stroke="#4aaab0" stroke-width="2"/></svg></button>
<button aria-label="New empty layer"><svg width="16" height="12"><use href="#layer" width="14" height="13"/><path d="M13 0v6M10 3h6" stroke="#4aaab0" stroke-width="2"/></svg></button>
<button aria-label="New layer from selected"><svg width="16" height="12"><use href="#layer" width="14" height="13"/><circle cx="12" cy="3.500" r="3" fill="#4aaab0"/></svg></button>
</div>
<div class="dark flex-fill pt-1 ps-1"><div class="d-flex align-items-center" style="height:14px">
<span class="layerbit">V</span><span class="layerbit ms-1">P</span><span class="layerbit ms-1"></span><span class="ms-1 flex-shrink-0" style="width:15px;height:13px;background:#9b0027"></span><span class="ms-1 layername text-nowrap">Automatic_Sliding_Door_Entrance_System_mb_standart:/</span></div></div>
</div>
</aside>
<div class="d-flex flex-column"><button class="vtab" style="height:99px">Attribute Editor</button><button class="vtab on" style="height:146px">Channel Box / Layer Editor</button></div>
</main>

<div class="seam d-flex align-items-center" style="height:34px">
<div class="grip my-1"></div>
<div class="timeline d-flex flex-fill position-relative" id="timeline" style="margin-left:3px"></div>
<input class="field ps-1 w64" aria-label="Current frame" value="1" style="height:17px;margin-left:6px">
<div class="d-flex" style="width:174px;margin:0 9px 0 5px">
<button class="pb" aria-label="Go to start"><svg width="16" height="12" fill="#c6c6c6"><path d="M0 0h2v12H0zM9 1v10L3 6zM16 1v10l-6-5z"/></svg></button>
<button class="pb" aria-label="Step back"><svg width="12" height="12" fill="#c6c6c6"><path d="M0 0h2v12H0zM11 1v10L3 6z"/></svg></button>
<button class="pb" aria-label="Previous key"><svg width="13" height="16"><path d="M2 0v16" stroke="#e07b3e" stroke-width="2.500"/><path d="M12 3v10L4 8z" fill="#c6c6c6"/></svg></button>
<button class="pb" aria-label="Play backwards"><svg width="12" height="14" fill="#c6c6c6"><path d="M12 0v14L0 7z"/></svg></button>
<button class="pb" aria-label="Play forwards"><svg width="12" height="14" fill="#c6c6c6"><path d="M0 0v14l12-7z"/></svg></button>
<button class="pb" aria-label="Next key"><svg width="13" height="16"><path d="M11 0v16" stroke="#e07b3e" stroke-width="2.500"/><path d="M1 3v10l8-5z" fill="#c6c6c6"/></svg></button>
<button class="pb" aria-label="Step forward"><svg width="12" height="12" fill="#c6c6c6"><path d="M10 0h2v12h-2zM1 1v10l8-5z"/></svg></button>
<button class="pb" aria-label="Go to end"><svg width="16" height="12" fill="#c6c6c6"><path d="M14 0h2v12h-2zM7 1v10l6-5zM0 1v10l6-5z"/></svg></button>
</div>
</div>

<div class="d-flex align-items-center" style="height:31px">
<div class="grip my-1"></div>
<input class="field ps-1 w64 h21" aria-label="Animation start" value="1" style="margin-left:5px">
<input class="field ps-1 w64 h21" aria-label="Playback start" value="1" style="margin-left:7px">
<div class="flex-fill h21 d-flex align-items-center" style="background:#383838;margin:0 6px;padding-left:6px">
<div class="rangebar d-flex align-items-center" style="width:60.500%"><span class="knob me-1"></span><span class="me-auto">1</span><span class="me-1">120</span><span class="knob"></span></div>
</div>
<input class="field ps-1 w64 h21" aria-label="Playback end" value="120">
<input class="field ps-1 w64 h21 mx-2" aria-label="Animation end" value="200">
<svg width="10" height="7" stroke="#999"><path d="M1 1h7L4.500 5z"/></svg>
<button class="boxed ms-1" style="width:96px">No Anim Layer</button>
<svg class="ms-2" width="10" height="7" stroke="#999"><path d="M1 1h7L4.500 5z"/></svg>
<button class="boxed ms-2" style="width:95px">No Character Set</button>
<button class="ms-2" aria-label="Auto key"><svg width="18" height="18"><circle cx="9" cy="9" r="6.500" stroke="#c6c6c6" stroke-width="1.500" stroke-dasharray="8 2.200"/><path d="M9 4v10M5 9h8" stroke="#e07b3e" stroke-width="2"/></svg></button>
<button class="ms-2" style="margin-right:10px" aria-label="Preferences"><svg width="19" height="18"><circle cx="5" cy="5" r="3.500" stroke="#c6c6c6" stroke-width="1.500"/><circle cx="14.500" cy="4" r="2" fill="#e88038"/><path d="M7 8l4-1 2 1-2 4 3 2v3M11 12l-2 3H5M13 8l2 2h3" stroke="#e88038" stroke-width="2"/></svg></button>
</div>

<div class="d-flex align-items-center" style="height:31px">
<div class="grip my-1"></div>
<label class="text-light" for="mel" style="width:33px;margin-left:14px">MEL</label>
<input id="mel" class="field h21" style="flex:579 1 0">
<input class="field h21" aria-label="Command result" readonly style="flex:1125 1 0;margin-left:6px">
<button class="mx-2" aria-label="Script editor"><svg width="17" height="18"><path d="M0 0h17v18H0z" fill="#c6c6c6"/><path d="M0 3.500h17M2 1.500h6" stroke="#444"/><path d="M6 6q-2 0-1.500 2T3 10.500q2 .5 1.500 2.500T6 15M11 6q2 0 1.500 2t1.500 2.500q-2 .5-1.500 2.500T11 15" stroke="#333" stroke-width="1.400"/><path d="M8 8h1.500v1.500H8zM8 12h1.500l-1 3z" fill="#333"/></svg></button>
</div>
<footer class="seam hint d-flex align-items-center"><div class="grip my-1"></div><span class="tight" style="margin-left:14px">Select Tool: select an object</span></footer>

<script>
// Timeline: one cell per five frames.
const tl = document.getElementById('timeline');
let cells = '<div style="flex:59 1 0"></div><span class="nowmark">1</span>';
for (let f = 5; f <= 120; f += 5) cells += `<div class="tick" style="flex:${f < 120 ? 63 : 19} 1 0">${f}</div>`;
tl.innerHTML = cells;

// Sliding door wireframe, three units to a pixel.
const out = [];
const L = (x1, y1, x2, y2, w = 3, dash = '') => out.push(`<path d="M${x1} ${y1}L${x2} ${y2}" stroke-width="${w}"${dash ? ` stroke-dasharray="${dash}"` : ''}/>`);
const F = pts => out.push(`<path d="M${pts}z" fill="#9b0027" stroke="none"/>`);
// n lines spread from the segment a-b to the segment c-d
const B = (a, b, c, d, n, w = 2, dash = '') => { for (let i = 0; i < n; i++) { const t = n > 1 ? i / (n - 1) : 0; L(a[0] + (c[0] - a[0]) * t, a[1] + (c[1] - a[1]) * t, b[0] + (d[0] - b[0]) * t, b[1] + (d[1] - b[1]) * t, w, dash); } };

out.push('<path d="M615 1950L780 1960 712 2022 598 1975z" fill="#3d4242" stroke="none"/>');
// head frame
L(62, 70, 1412, 122, 6); L(62, 78, 1412, 130, 4, '90 8');
B([90, 80], [1412, 134], [90, 94], [1340, 148], 4, 2, '110 8');
F('62 92 200 97 700 114 1375 148 1375 172 700 139 100 118');
B([160, 123], [1350, 178], [160, 129], [1350, 186], 2, 3, '160 6');
out.push('<path d="M200 108L700 126 1340 159" stroke="#7d8aa2" stroke-width="2" stroke-dasharray="14 86"/>');
out.push('<path d="M62 70H100V110H62zM75 70V110M90 70V240M120 70V110M140 70V110M62 90H100M1330 118H1412V172H1330zM1390 120V172M1365 118V172M1402 120V170M1345 118V172M1330 135H1412M1330 150H1412"/>');
[[298, 78, 104], [358, 80, 104], [648, 88, 116], [700, 90, 118], [1035, 105, 132], [1086, 107, 134]].forEach(v => L(v[0], v[1], v[0], v[2], 2));
// outer jambs
L(64, 110, 166, 1808, 5); L(74, 110, 174, 1808, 2); L(86, 110, 187, 1812, 4, '60 4'); L(100, 110, 190, 1812, 4, '36 6');
L(166, 1808, 187, 1812); L(187, 1812, 215, 1795);
L(1412, 172, 1328, 2140, 5); L(1402, 172, 1318, 2140, 2, '90 12'); L(1385, 160, 1308, 2150, 4, '60 5'); L(1378, 300, 1290, 2187, 3, '50 5');
// small cleats on the jambs
for (let k = 0; k < 6; k++) { const y = 430 + k * 235, x = 88 + k * 15; L(x, y, x + 42, y - 12, 2); L(x + 4, y + 10, x + 46, y - 2, 2); }
for (let k = 0; k < 8; k++) { const y = 250 + k * 265, x = 1404 - k * 11; L(x - 50, y + 10, x, y, 2); L(x - 50, y + 20, x, y + 8, 2); }
// transom posts
F('104 105 146 105 158 480 118 480');
B([92, 110], [118, 560], [100, 110], [140, 560], 3, 3, '40 5');
B([152, 120], [172, 600], [165, 120], [180, 600], 3, 3, '90 6'); L(183, 125, 198, 462, 2);
B([140, 480], [146, 600], [158, 480], [172, 600], 3, 3);
F('1348 150 1376 150 1358 600 1352 740 1340 740 1332 600');
B([1330, 160], [1318, 600], [1342, 160], [1332, 600], 3, 3); L(1275, 165, 1266, 580, 2);
B([1300, 165], [1287, 585], [1316, 165], [1304, 585], 3, 2);
B([1336, 610], [1312, 860], [1388, 600], [1376, 860], 7, 3, '80 5');
B([1300, 620], [1290, 740], [1320, 620], [1310, 740], 3, 2);
[610, 660, 735, 845].forEach(y => { L(1340, y, 1388, y - 10, 3); L(1335, y + 12, 1385, y + 2, 2); });
// louvres
[[200, 275], [290, 385], [383, 495]].forEach(r => { L(90, r[0] - 8, 1350, r[1] - 7, 2); L(150, r[0] - 3, 1350, r[1] - 2, 4, '130 5'); L(150, r[0] + 2, 1350, r[1] + 3, 3, '60 5'); L(180, r[0] + 8, 1350, r[1] + 8, 2); });
[[352, 366], [384, 394], [390, 400], [410, 422]].forEach(v => L(v[0], 122, v[1], 487, 3));
[[645, 653], [678, 684], [685, 688], [703, 706]].forEach(v => L(v[0], 135, v[1], 525, 3));
[[974, 970], [1000, 996], [1005, 1000], [1024, 1017]].forEach(v => L(v[0], 150, v[1], 558, 3));
// transom sill
F('125 460 160 460 1345 588 1345 621 150 488');
out.push('<path d="M720 536L1330 602" stroke="#7a5f78" stroke-width="2" stroke-dasharray="3 22"/>');
B([95, 476], [1345, 625], [95, 488], [1345, 632], 3, 3);
// header cover
B([95, 500], [1385, 664], [95, 565], [1385, 716], 6, 2);
B([470, 590], [1330, 692], [200, 590], [1345, 722], 8, 3, '80 6');
[[217, 490, 585], [315, 512, 545], [371, 515, 545], [645, 545, 650], [697, 548, 650], [1015, 585, 690], [1060, 590, 690], [1240, 612, 720], [1285, 620, 735]].forEach(v => L(v[0], v[1], v[0], v[2], 3));
out.push('<g transform="rotate(6 370 572)"><rect x="275" y="546" width="190" height="52" rx="25"/><rect x="283" y="552" width="174" height="40" rx="20"/><rect x="290" y="558" width="160" height="28" rx="14"/><rect x="298" y="546" width="14" height="52"/><rect x="438" y="546" width="12" height="52"/><path d="M275 565H465M275 572H465M275 580H465" stroke-dasharray="16 3"/></g>');
L(110, 600, 180, 560, 4); L(98, 575, 150, 545, 4); L(98, 590, 170, 590, 4); L(130, 562, 172, 550, 8); L(100, 580, 160, 610, 3);
// header band and door tracks
F('145 575 700 655 1340 732 1345 764 700 686 165 612'); F('170 606 700 684 700 710 170 640');
out.push('<g stroke="#7b5f78" stroke-width="2"><path d="M190 588L690 660" stroke-dasharray="10 12"/><path d="M190 612L640 680" stroke-dasharray="70 6"/></g>');
B([185, 642], [650, 712], [185, 670], [650, 735], 6, 2, '40 5');
F('190 668 660 738 660 757 190 690');
B([715, 696], [1310, 780], [715, 712], [1310, 796], 3, 2); B([715, 722], [1310, 804], [715, 744], [1310, 826], 3, 2, '120 6');
F('715 752 1310 833 1310 857 715 773');
[[410, 640, 700], [427, 640, 702], [215, 640, 675], [742, 690, 756], [960, 715, 786], [976, 716, 788], [1216, 745, 820], [1232, 745, 822]].forEach(v => L(v[0], v[1], v[0], v[2], 3));
// left stile
F('143 555 175 575 196 690 222 1190 248 1700 240 1806 210 1800 193 1500 170 1050 150 700');
// center stiles
F('658 645 704 650 706 900 722 1320 728 1850 722 1960 680 1980 672 1850 665 1320 660 900');
L(716, 670, 731, 1860, 9); L(641, 750, 659, 1850, 6); L(652, 750, 668, 1850, 2); L(708, 660, 722, 1900, 3);
out.push('<path d="M708 720L716 1300M711 700L711 900M680 660L680 740M692 1880V1960M712 1870V1960" stroke="#6a5a72" stroke-width="2" stroke-dasharray="60 10"/>');
[850, 1230, 1440].forEach(y => { L(650, y, 668, y, 2); L(650, y + 7, 668, y + 7, 2); });
// right stile and jamb
F('1265 845 1292 850 1285 1500 1265 2180 1228 2165 1225 2030 1243 1500');
B([1298, 860], [1262, 2165], [1372, 860], [1300, 2160], 8, 4, '110 6');
B([1305, 760], [1262, 2160], [1340, 760], [1290, 2185], 4, 2);
F('1318 740 1330 740 1290 2000 1280 2000'); B([1270, 750], [1262, 860], [1300, 750], [1292, 860], 4, 4);
out.push('<path d="M1225 2160L1260 2175 1290 2187 1328 2140M1262 2140L1290 2150 1328 2105"/>');
// glass lines, left leaf
L(212, 690, 266, 1705, 4); L(342, 705, 384, 1740, 4); L(499, 730, 529, 1785, 4);
L(200, 730, 660, 803); L(210, 960, 665, 1045); L(235, 1460, 670, 1580); L(248, 1663, 665, 1790);
// glass lines, right leaf
L(873, 795, 873, 1912, 5); L(1062, 820, 1043, 1962, 4); L(1232, 840, 1197, 2010, 4);
L(720, 825, 1263, 909); L(725, 1075, 1255, 1177); L(730, 1615, 1235, 1755); L(735, 1835, 1225, 1987);
// mid rails
F('215 1189 660 1286 660 1341 215 1240'); F('725 1319 1250 1438 1290 1440 1290 1500 1245 1498 725 1374');
out.push('<g stroke="#5b5f70" stroke-width="3" stroke-dasharray="3 9"><path d="M213 1208L660 1308M225 1217L660 1317"/><path d="M735 1348L1285 1470"/></g>');
// bottom rails
F('245 1697 672 1822 672 1851 245 1722'); F('728 1865 1232 2018 1232 2052 728 1892');
B([245, 1735], [660, 1868], [230, 1800], [670, 1940], 5, 2);
B([215, 1795], [680, 1950], [230, 1812], [680, 1965], 4, 4);
[[248, 1725, 1800], [285, 1735, 1815], [268, 1728, 1800], [450, 1780, 1862], [465, 1785, 1868], [645, 1840, 1920], [660, 1850, 1950]].forEach(v => L(v[0], v[1], v[0], v[2], 3));
B([728, 1905], [1230, 2066], [728, 1975], [1230, 2140], 6, 2);
B([700, 1970], [1255, 2160], [700, 1985], [1262, 2178], 4, 3);
[[738, 1895, 1990], [752, 1900, 1995], [950, 1960, 2055], [965, 1965, 2062], [1178, 2035, 2130], [1190, 2040, 2135]].forEach(v => L(v[0], v[1], v[0], v[2], 3));
out.push('<path d="M660 1940L690 1978 735 1955M662 1950V1985L700 1990M672 1850V1980M720 1880V1980"/>');
document.getElementById('wire').innerHTML = out.join('');
</script>
</body>
</html>
